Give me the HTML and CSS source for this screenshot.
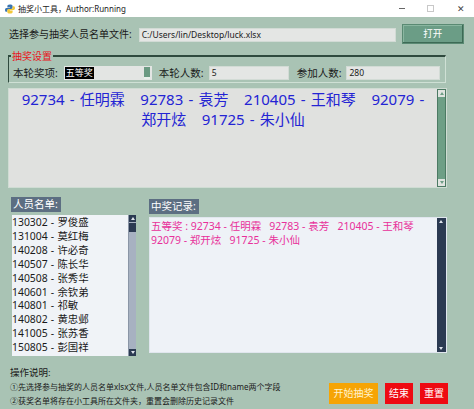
FILE: index.html
```html
<!DOCTYPE html>
<html lang="zh">
<head>
<meta charset="utf-8">
<link rel="stylesheet" href="styles.css">
</head>
<body>
<div class="window">
  <div class="titlebar">
    <svg class="appicon" width="10" height="10" viewBox="0 0 11 11">
      <path d="M5.5 0.5 C3 0.5 2.6 1.5 2.6 2.6 V3.8 H5.6 V4.3 H1.6 C0.6 4.3 0 5.2 0 6.5 C0 7.9 0.7 8.6 1.6 8.6 H2.6 V7.1 C2.6 6.1 3.4 5.4 4.3 5.4 H6.9 C7.8 5.4 8.4 4.7 8.4 3.9 V2.3 C8.4 1.2 7.4 0.5 5.5 0.5 Z" fill="#3a74b0"/>
      <path d="M5.5 10.5 C8 10.5 8.4 9.5 8.4 8.4 V7.2 H5.4 V6.7 H9.4 C10.4 6.7 11 5.8 11 4.5 C11 3.1 10.3 2.4 9.4 2.4 H8.4 V3.9 C8.4 4.9 7.6 5.6 6.7 5.6 H4.1 C3.2 5.6 2.6 6.3 2.6 7.1 V8.7 C2.6 9.8 3.6 10.5 5.5 10.5 Z" fill="#f2c83a"/>
    </svg>
    <span class="title">抽奖小工具，Author:Running</span>
    <span class="winbtns">
      <span class="wb minb"></span>
      <span class="wb maxb"></span>
      <span class="wb closeb">&#10005;</span>
    </span>
  </div>

  <div class="body">
    <div class="filerow">
      <span class="lbl">选择参与抽奖人员名单文件:</span>
      <div class="entry fileentry">C:/Users/lin/Desktop/luck.xlsx</div>
      <div class="openbtn">打开</div>
    </div>

    <div class="group">
      <div class="legend">抽奖设置</div>
      <div class="setrow">
        <span class="lbl">本轮奖项:</span>
        <div class="combo"><span class="sel">五等奖</span><span class="cbarrow"></span></div>
        <span class="lbl">本轮人数:</span>
        <div class="entry e2">5</div>
        <span class="lbl">参加人数:</span>
        <div class="entry e3">280</div>
      </div>
    </div>

    <div class="bigbox">
      <div class="bigtext">92734 - 任明霖&nbsp;&nbsp;&nbsp;92783 - 袁芳&nbsp;&nbsp;&nbsp;210405 - 王和琴&nbsp;&nbsp;&nbsp;92079 -<br>郑开炫&nbsp;&nbsp;&nbsp;91725 - 朱小仙</div>
      <div class="sb greensb"><span class="arr up"></span><span class="arr down"></span></div>
    </div>

    <div class="lower">
      <div class="leftcol">
        <div class="tag">人员名单:</div>
        <div class="listbox">
          <ul class="items">
            <li>130302 - 罗俊盛</li>
            <li>131004 - 莫红梅</li>
            <li>140208 - 许必奇</li>
            <li>140507 - 陈长华</li>
            <li>140508 - 张秀华</li>
            <li>140601 - 余钦弟</li>
            <li>140801 - 祁敏</li>
            <li>140802 - 黄忠邺</li>
            <li>141005 - 张苏香</li>
            <li>150805 - 彭国祥</li>
          </ul>
          <div class="sb bluesb"><span class="arr up dk"></span><span class="thumb"></span><span class="arr down dk"></span></div>
        </div>
      </div>
      <div class="rightcol">
        <div class="tag tag2">中奖记录:</div>
        <div class="resbox">
          <div class="restext">五等奖 : 92734 - 任明霖&nbsp;&nbsp;&nbsp;92783 - 袁芳&nbsp;&nbsp;&nbsp;210405 - 王和琴<br>92079 - 郑开炫&nbsp;&nbsp;&nbsp;91725 - 朱小仙</div>
          <div class="sb navysb"><span class="arr up dk"></span><span class="arr down dk"></span></div>
        </div>
      </div>
    </div>

    <div class="footer">
      <div class="notes">
        <div class="nt">操作说明:</div>
        <div class="n1">①先选择参与抽奖的人员名单xlsx文件,人员名单文件包含ID和name两个字段</div>
        <div class="n1">②获奖名单将存在小工具所在文件夹，重置会删除历史记录文件</div>
      </div>
      <div class="btns">
        <div class="b orange">开始抽奖</div>
        <div class="b red">结束</div>
        <div class="b red">重置</div>
      </div>
    </div>
  </div>
</div>
</body>
</html>
```

FILE: styles.css
```css
* { box-sizing: border-box; }
html, body { margin: 0; padding: 0; }
body {
  width: 474px;
  height: 409px;
  overflow: hidden;
  font-family: "Noto Sans", "Noto Sans CJK SC", sans-serif;
  background: #a9c3b4;
  color: #1a1a1a;
}
.window { width: 474px; height: 409px; display: flex; flex-direction: column; }

.titlebar {
  height: 17px;
  background: #ffffff;
  display: flex;
  align-items: center;
  padding-left: 5px;
  font-size: 8px;
  line-height: 10px;
  color: #222;
}
.appicon { flex: none; }
.title { margin-left: 3px; }
.winbtns { margin-left: auto; display: flex; align-items: center; height: 17px; }
.wb { display: block; }
.minb { width: 6px; height: 1px; background: #666; margin-right: 22px; }
.maxb { width: 7px; height: 7px; border: 1px solid #c8c8c8; margin-right: 23px; }
.closeb { font-size: 9px; line-height: 10px; color: #444; margin-right: 9px; }

.body { flex: 1; padding: 6px 8px 0 8px; display: flex; flex-direction: column; }

.lbl { font-size: 10.5px; line-height: 14px; white-space: nowrap; }
.filerow .lbl { font-size: 10px; margin-left: 1px; }

.filerow { display: flex; align-items: center; height: 20px; margin-top: 1px; }
.entry {
  background: #e4e6e4;
  border: 1px solid #d2dbd5;
  font-size: 8.5px;
  height: 14px;
  line-height: 12px;
  padding-left: 2px;
  white-space: nowrap;
}
.fileentry { width: 257px; margin-left: 7px; margin-top: 1px; }
.openbtn {
  margin-left: 6px;
  width: 62px;
  height: 20px;
  background: #6b9d86;
  border: 1px solid #5a8a73;
  box-shadow: inset -1px -1px 0 #3d6a55, inset 1px 1px 0 #8ab6a0;
  color: #ffffff;
  font-size: 9.5px;
  text-align: center;
  line-height: 18px;
}

.group {
  margin-top: 11px;
  width: 438px;
  height: 28px;
  border-top: 2px solid #2f4a3e;
  border-left: 1px solid #2f4a3e;
  border-right: 1px solid #cfe0d5;
  border-bottom: 1px solid #cfe0d5;
  position: relative;
  padding: 8px 0 0 4px;
}
.legend {
  position: absolute;
  left: 2px;
  top: -7px;
  background: #a9c3b4;
  color: #e8141c;
  font-size: 10px;
  line-height: 12px;
  padding: 0 1px;
}
.setrow { display: flex; align-items: center; height: 15px; }
.combo {
  width: 88px;
  height: 14px;
  margin-left: 6px;
  margin-right: 7px;
  background: #e3e5e3;
  display: flex;
  align-items: center;
  position: relative;
}
.sel { background: #000; color: #fff; font-size: 9px; line-height: 12px; padding: 0 1px; margin-left: 1px; }
.cbarrow {
  position: absolute;
  right: 2px; top: 1px;
  width: 6px; height: 12px;
  background: #6b9a82;
  border-bottom: 2px solid #e8f0ea;
}
.e2 { width: 80px; margin-left: 5px; margin-right: 8px; }
.e3 { width: 94px; margin-left: 5px; }

.bigbox {
  margin-top: 5px;
  width: 439px;
  height: 100px;
  background: #e0e1df;
  border: 1px solid #cfdcd3;
  display: flex;
}
.bigtext {
  flex: 1;
  text-align: center;
  color: #2424d4;
  font-size: 15px;
  line-height: 20px;
  word-spacing: 1.3px;
  white-space: nowrap;
}
.sb { width: 9px; display: flex; flex-direction: column; position: relative; }
.greensb { background: #6e9f86; border: 1px solid #4c7a63; }
.arr { display: block; height: 7px; background: #e0e4e0; position: relative; flex: none; }
.arr.dk { background: #2b3a52; }
.arr::after {
  content: "";
  position: absolute;
  left: 1.5px; top: 2px;
  border-left: 2.5px solid transparent;
  border-right: 2.5px solid transparent;
}
.arr.up::after { border-bottom: 3px solid #6e9f86; }
.arr.down::after { border-top: 3px solid #6e9f86; }
.arr.dk.up::after { border-bottom-color: #dfe4ec; }
.arr.dk.down::after { border-top-color: #dfe4ec; }
.arr.down { margin-top: auto; }

.lower { display: flex; margin-top: 9px; }
.leftcol { width: 138px; padding-left: 3px; }
.rightcol { flex: 1; padding-left: 3px; }
.tag {
  display: block;
  width: max-content;
  background: #5c6e82;
  color: #ffffff;
  font-size: 10.5px;
  line-height: 15px;
  padding: 0 3px 0 2px;
}
.tag2 { margin-top: 2px; }
.listbox {
  margin-top: 3px;
  margin-left: 1px;
  width: 124px;
  height: 141px;
  background: #f0f3f7;
  display: flex;
}
.items {
  list-style: none;
  margin: 0;
  padding: 1px 0 0 0;
  flex: 1;
  font-size: 10.4px;
  line-height: 13.9px;
  word-spacing: 0.5px;
  overflow: hidden;
}
.items li { white-space: nowrap; padding-left: 0; }
.bluesb { background: #a7b1c1; border-left: 1px solid #8a95a6; width: 8px; }
.thumb { display: block; height: 10px; background: #2b3a52; border-top: 1px solid #a7b1c1; }

.resbox {
  margin-top: 3px;
  width: 298px;
  height: 136px;
  background: #eef2f7;
  border: 1px solid #e0e6ee;
  display: flex;
}
.restext {
  flex: 1;
  color: #e8309a;
  font-size: 10.5px;
  line-height: 14px;
  padding-left: 1px;
  padding-top: 1px;
  white-space: nowrap;
  overflow: hidden;
}
.navysb { background: #2b3a52; }

.footer { display: flex; margin-top: 10px; }
.notes { flex: 1; padding-left: 2px; }
.nt { font-size: 9.5px; line-height: 13px; }
.n1 { font-size: 8px; line-height: 14px; white-space: nowrap; }
.notes .nt + .n1 { margin-top: 1px; }
.btns { display: flex; align-items: flex-start; gap: 7px; padding-top: 17px; margin-right: 18px; }
.b {
  height: 21px;
  line-height: 21px;
  color: #fff;
  font-size: 10px;
  text-align: center;
}
.orange { width: 49px; background: #f6a405; color: #fff4d0; }
.red { width: 28px; background: #ee0a12; }
```
